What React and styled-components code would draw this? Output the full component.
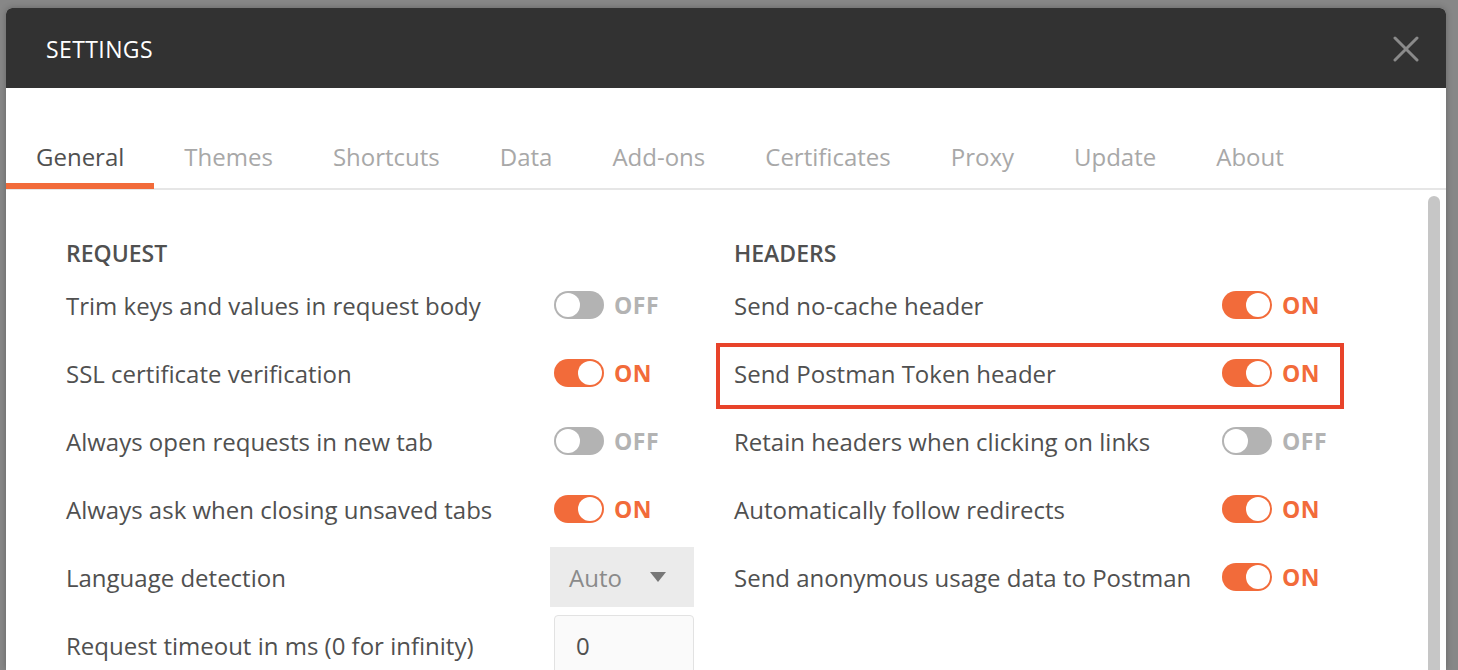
import React from "react";
import styled, { createGlobalStyle } from "styled-components";

const Global = createGlobalStyle`
  html, body { margin: 0; padding: 0; }
  body {
    background: #878787;
    font-family: "Open Sans", "Noto Sans", sans-serif;
    overflow: hidden;
  }
`;

const Page = styled.div`
  width: 1458px;
  height: 670px;
  background: #878787;
  padding: 8px 12px 0 6px;
  box-sizing: border-box;
  position: relative;
  overflow: hidden;
`;

const Modal = styled.div`
  width: 1440px;
  height: 662px;
  background: #fff;
  border-radius: 6px 6px 0 0;
  overflow: hidden;
  display: flex;
  flex-direction: column;
  box-shadow: 0 0 6px rgba(0,0,0,0.25);
`;

const Header = styled.div`
  height: 80px;
  flex: none;
  background: #323232;
  display: flex;
  align-items: center;
  justify-content: space-between;
  padding: 0 26px 0 40px;
`;

const Title = styled.div`
  color: #fff;
  font-size: 23px;
  letter-spacing: 0.4px;
  margin-top: 2px;
`;

const Close = styled.button`
  background: none;
  border: 0;
  padding: 0;
  width: 28px;
  height: 28px;
  display: flex;
  align-items: center;
  justify-content: center;
  cursor: pointer;
  margin-top: 2px;
`;

const Tabs = styled.div`
  flex: none;
  margin-top: 46px;
  display: flex;
  border-bottom: 2px solid #e6e6e6;
`;

const Tab = styled.div`
  padding: 0 30px;
  height: 55px;
  line-height: 46px;
  font-size: 24px;
  color: ${p => (p.$active ? "#505050" : "#a8a8a8")};
  border-bottom: 6px solid ${p => (p.$active ? "#f26b3a" : "transparent")};
  box-sizing: border-box;
  margin-bottom: -1px;
  white-space: nowrap;
`;

const Body = styled.div`
  flex: 1;
  display: flex;
  min-height: 0;
  position: relative;
`;

const Content = styled.div`
  flex: 1;
  display: grid;
  grid-template-columns: 628px 608px;
  column-gap: 40px;
  padding: 45px 0 0 60px;
  align-content: start;
`;

const Column = styled.div`
  display: flex;
  flex-direction: column;
`;

const SectionTitle = styled.div`
  font-size: 23px;
  font-weight: 600;
  color: #505050;
  height: 36px;
  line-height: 36px;
`;

const Row = styled.div`
  display: grid;
  grid-template-columns: 488px 1fr;
  align-items: center;
  height: 68px;
  position: relative;
`;

const Label = styled.div`
  font-size: 24px;
  color: #505050;
  white-space: nowrap;
`;

const Control = styled.div`
  display: flex;
  align-items: center;
  gap: 10px;
`;

const Track = styled.div`
  width: 50px;
  height: 28px;
  border-radius: 14px;
  background: ${p => (p.$on ? "#f26b3a" : "#b3b3b3")};
  position: relative;
  box-sizing: border-box;
`;

const Knob = styled.div`
  position: absolute;
  top: 2px;
  left: ${p => (p.$on ? "24px" : "2px")};
  width: 24px;
  height: 24px;
  border-radius: 50%;
  background: #fff;
`;

const State = styled.span`
  font-size: 23px;
  font-weight: 700;
  color: ${p => (p.$on ? "#f26b3a" : "#b3b3b3")};
  letter-spacing: 0.5px;
`;

const Select = styled.div`
  margin-left: -4px;
  width: 144px;
  height: 60px;
  background: #ebebeb;
  display: flex;
  align-items: center;
  justify-content: space-between;
  padding: 0 28px 0 19px;
  box-sizing: border-box;
  font-size: 24px;
  color: #8a8a8a;
`;

const Caret = styled.span`
  width: 0;
  height: 0;
  border-left: 8px solid transparent;
  border-right: 8px solid transparent;
  border-top: 10px solid #777;
`;

const Input = styled.div`
  width: 140px;
  height: 60px;
  border: 1px solid #e2e2e2;
  border-radius: 4px;
  background: #fafafa;
  box-sizing: border-box;
  padding: 0 0 0 21px;
  font-size: 24px;
  color: #505050;
  display: flex;
  align-items: center;
`;

const Highlight = styled.div`
  position: absolute;
  left: -18px;
  top: 4px;
  width: 628px;
  height: 66px;
  border: 4px solid #e8432a;
  box-sizing: border-box;
  pointer-events: none;
`;

const Scrollbar = styled.div`
  position: absolute;
  right: 6px;
  top: 6px;
  bottom: 0;
  width: 12px;
  border-radius: 6px 6px 0 0;
  background: #c6c6c6;
`;

function Toggle({ on }) {
  return (
    <Control>
      <Track $on={on}>
        <Knob $on={on} />
      </Track>
      <State $on={on}>{on ? "ON" : "OFF"}</State>
    </Control>
  );
}

const tabs = ["General", "Themes", "Shortcuts", "Data", "Add-ons", "Certificates", "Proxy", "Update", "About"];

const requestRows = [
  ["Trim keys and values in request body", false],
  ["SSL certificate verification", true],
  ["Always open requests in new tab", false],
  ["Always ask when closing unsaved tabs", true],
];

const headerRows = [
  ["Send no-cache header", true],
  ["Send Postman Token header", true, true],
  ["Retain headers when clicking on links", false],
  ["Automatically follow redirects", true],
  ["Send anonymous usage data to Postman", true],
];

export default function App() {
  return (
    <Page>
      <Global />
      <Modal>
        <Header>
          <Title>SETTINGS</Title>
          <Close aria-label="Close">
            <svg width="26" height="26" viewBox="0 0 26 26">
              <path d="M2 2 L24 24 M24 2 L2 24" stroke="#8a8a8a" strokeWidth="3" strokeLinecap="round" />
            </svg>
          </Close>
        </Header>
        <Tabs>
          {tabs.map((t, i) => (
            <Tab key={t} $active={i === 0}>{t}</Tab>
          ))}
        </Tabs>
        <Body>
          <Content>
            <Column>
              <SectionTitle>REQUEST</SectionTitle>
              {requestRows.map(([l, on]) => (
                <Row key={l}>
                  <Label>{l}</Label>
                  <Toggle on={on} />
                </Row>
              ))}
              <Row>
                <Label>Language detection</Label>
                <Select>
                  <span>Auto</span>
                  <Caret />
                </Select>
              </Row>
              <Row>
                <Label>Request timeout in ms (0 for infinity)</Label>
                <Input>0</Input>
              </Row>
            </Column>
            <Column>
              <SectionTitle>HEADERS</SectionTitle>
              {headerRows.map(([l, on, hl]) => (
                <Row key={l}>
                  {hl && <Highlight />}
                  <Label>{l}</Label>
                  <Toggle on={on} />
                </Row>
              ))}
            </Column>
          </Content>
          <Scrollbar />
        </Body>
      </Modal>
    </Page>
  );
}
